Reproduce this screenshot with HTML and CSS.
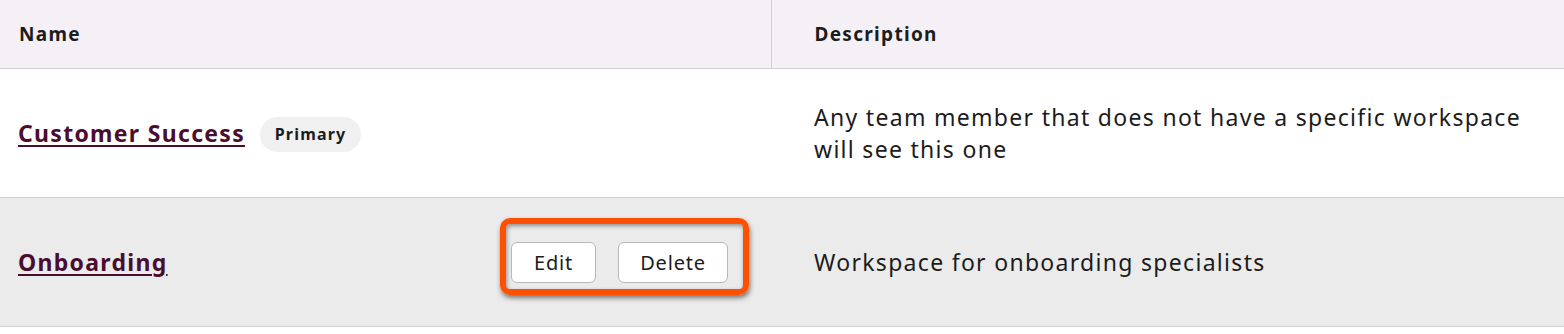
FILE: index.html
```html
<!DOCTYPE html>
<html lang="en">
<head>
    <meta charset="UTF-8">
    <title>Workspaces</title>
    <link rel="stylesheet" href="styles.css">
</head>
<body>

<table class="workspaces">
    <thead>
        <tr>
            <th class="col-name">Name</th>
            <th class="col-desc">Description</th>
        </tr>
    </thead>
    <tbody>
        <tr class="row">
            <td class="cell-name">
                <div class="name-wrap">
                    <a href="#" class="ws-link">Customer Success</a>
                    <span class="badge">Primary</span>
                </div>
            </td>
            <td class="cell-desc">Any team member that does not have a specific workspace will see this one</td>
        </tr>
        <tr class="row row-hover">
            <td class="cell-name">
                <div class="name-wrap">
                    <a href="#" class="ws-link">Onboarding</a>
                    <!-- Actions shown on hover, outlined for the screenshot -->
                    <div class="actions">
                        <button class="btn btn-edit">Edit</button>
                        <button class="btn btn-delete">Delete</button>
                        <span class="highlight"></span>
                    </div>
                </div>
            </td>
            <td class="cell-desc">Workspace for onboarding specialists</td>
        </tr>
    </tbody>
</table>

</body>
</html>
```

FILE: styles.css
```css
body {
    margin: 0;
    padding: 0;
    font-family: 'Noto Sans', sans-serif;
    color: #1c1c1c;
    background-color: #fff;
}

.workspaces {
    width: 100%;
    border-collapse: collapse;
}

th {
    height: 68px;
    padding: 0;
    background-color: #f5f0f6;
    border-bottom: 1px solid #cfcfcf;
    text-align: left;
    font-size: 19px;
    font-weight: 700;
    letter-spacing: 1.3px;
}

.col-name {
    width: 771px;
    padding-left: 19px;
    border-right: 1px solid #cfcfcf;
    box-sizing: border-box;
}

.col-desc {
    padding-left: 43px;
}

.row td {
    height: 128px;
    padding: 0;
    border-bottom: 1px solid #cfcfcf;
    vertical-align: middle;
}

.row-hover td {
    background-color: #ebebeb;
}

.cell-name {
    padding-left: 18px !important;
    padding-right: 43px !important;
}

.cell-desc {
    padding-left: 43px !important;
    padding-right: 20px !important;
    font-size: 23px;
    letter-spacing: 1.3px;
    line-height: 32px;
}

.name-wrap {
    display: flex;
    align-items: center;
}

.ws-link {
    color: #4a0d2f;
    font-size: 23px;
    font-weight: 700;
    letter-spacing: 1.3px;
    text-decoration: underline;
    text-decoration-thickness: 2px;
    text-underline-offset: 3px;
}

.badge {
    margin-left: 15px;
    margin-top: 3px;
    width: 101px;
    height: 35px;
    line-height: 35px;
    border-radius: 18px;
    background-color: #f0f0f0;
    text-align: center;
    font-size: 16px;
    font-weight: 700;
    letter-spacing: 1.2px;
}

.actions {
    position: relative;
    display: flex;
    gap: 22px;
    margin-left: auto;
}

.btn {
    height: 41px;
    padding: 0;
    background-color: #fff;
    border: 1px solid #b8b8b8;
    border-radius: 6px;
    font-family: 'Noto Sans', sans-serif;
    font-size: 20px;
    letter-spacing: 0.8px;
    color: #1c1c1c;
}

.btn-edit {
    width: 85px;
}

.btn-delete {
    width: 110px;
}

/* Orange annotation box round the buttons */
.highlight {
    position: absolute;
    top: -24px;
    left: -11px;
    right: -21px;
    bottom: -12px;
    border: 6px solid #ff4f00;
    border-radius: 10px;
    box-shadow: 1px 3px 5px rgba(0, 0, 0, 0.5), inset 1px 2px 4px rgba(0, 0, 0, 0.4);
}
```
